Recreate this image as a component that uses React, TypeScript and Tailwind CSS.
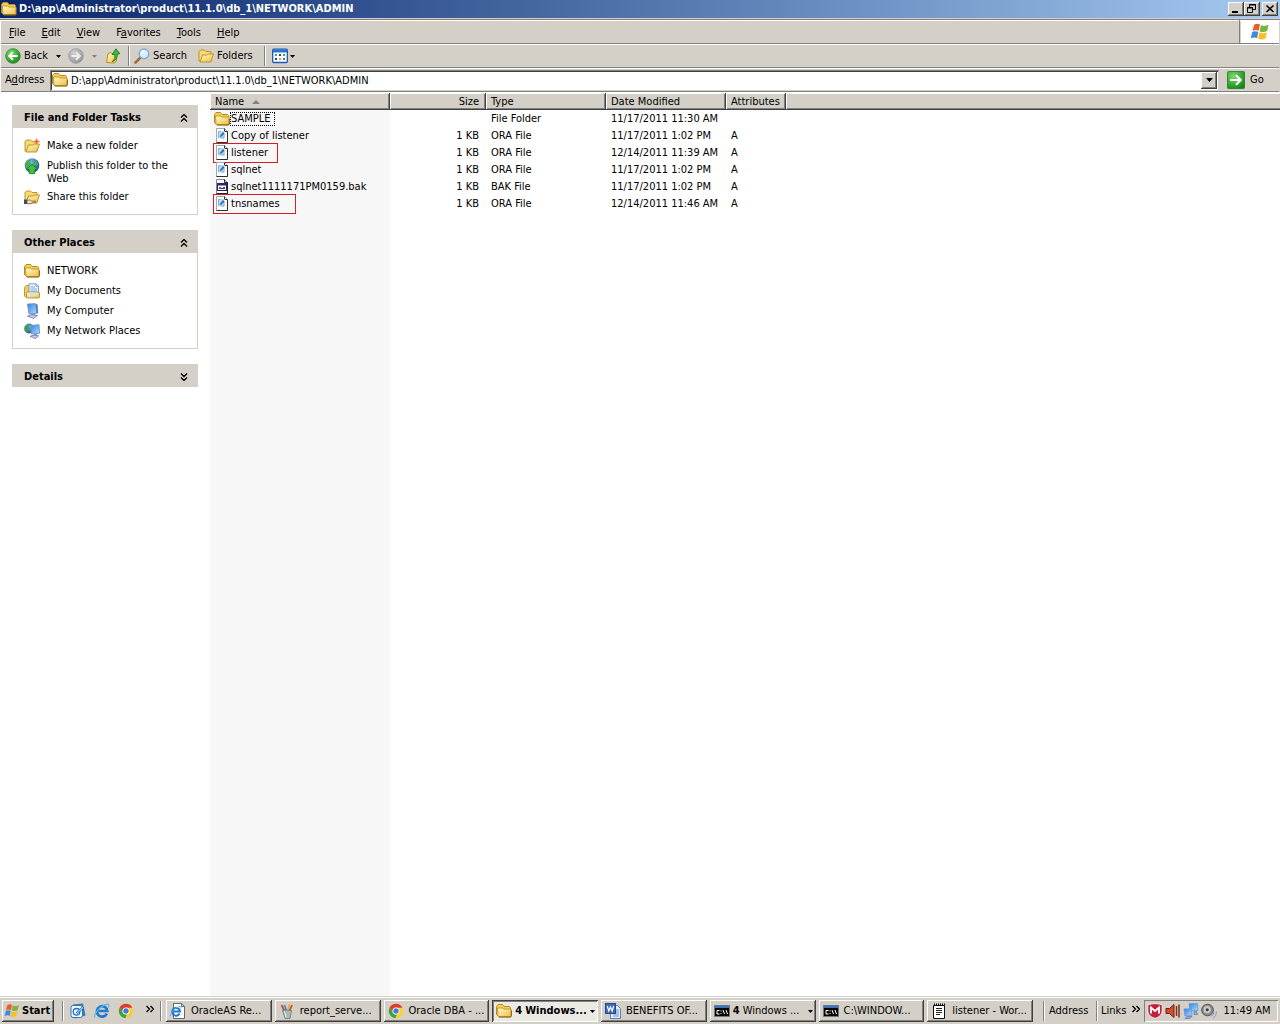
import type { ReactNode } from 'react'
import clsx from 'clsx'

const PATH = 'D:\\app\\Administrator\\product\\11.1.0\\db_1\\NETWORK\\ADMIN'

const raised = 'bg-[#d4d0c8] shadow-[inset_-1px_-1px_#404040,inset_1px_1px_#fff,inset_-2px_-2px_#808080]'
const pressed = 'bg-[#ebe9e4] shadow-[inset_1px_1px_#404040,inset_-1px_-1px_#fff,inset_2px_2px_#808080]'

type FileItem = {
  name: string
  kind: 'folder' | 'ora' | 'bak'
  size: string
  type: string
  modified: string
  attributes: string
  focused?: boolean
  mark?: string
}

const files: FileItem[] = [
  { name: 'SAMPLE', kind: 'folder', size: '', type: 'File Folder', modified: '11/17/2011 11:30 AM', attributes: '', focused: true },
  { name: 'Copy of listener', kind: 'ora', size: '1 KB', type: 'ORA File', modified: '11/17/2011 1:02 PM', attributes: 'A' },
  { name: 'listener', kind: 'ora', size: '1 KB', type: 'ORA File', modified: '12/14/2011 11:39 AM', attributes: 'A', mark: 'w-[65px]' },
  { name: 'sqlnet', kind: 'ora', size: '1 KB', type: 'ORA File', modified: '11/17/2011 1:02 PM', attributes: 'A' },
  { name: 'sqlnet1111171PM0159.bak', kind: 'bak', size: '1 KB', type: 'BAK File', modified: '11/17/2011 1:02 PM', attributes: 'A' },
  { name: 'tnsnames', kind: 'ora', size: '1 KB', type: 'ORA File', modified: '12/14/2011 11:46 AM', attributes: 'A', mark: 'w-[83px]' },
]

const menus = [
  ['', 'F', 'ile'],
  ['', 'E', 'dit'],
  ['', 'V', 'iew'],
  ['F', 'a', 'vorites'],
  ['', 'T', 'ools'],
  ['', 'H', 'elp'],
]

function Icon({ children, className = 'size-4' }: { children: ReactNode; className?: string }) {
  return (
    <svg viewBox="0 0 16 16" className={clsx('shrink-0', className)} aria-hidden="true">
      {children}
    </svg>
  )
}

function Gradients() {
  return (
    <svg className="absolute size-0" aria-hidden="true">
      <defs>
        <linearGradient id="gold" x1="0" y1="0" x2="1" y2="1">
          <stop offset="0" stopColor="#fffbd0" />
          <stop offset="1" stopColor="#efbd3c" />
        </linearGradient>
        <linearGradient id="screen" x1="0" y1="0" x2="1" y2="1">
          <stop offset="0" stopColor="#2f7fe8" />
          <stop offset="1" stopColor="#a5e2ff" />
        </linearGradient>
        <radialGradient id="green" cx="0.35" cy="0.3" r="0.8">
          <stop offset="0" stopColor="#7bdc69" />
          <stop offset="1" stopColor="#128414" />
        </radialGradient>
        <radialGradient id="grey" cx="0.35" cy="0.3" r="0.8">
          <stop offset="0" stopColor="#d0d0d0" />
          <stop offset="1" stopColor="#919191" />
        </radialGradient>
        <radialGradient id="globe" cx="0.35" cy="0.3" r="0.8">
          <stop offset="0" stopColor="#7fc6f5" />
          <stop offset="1" stopColor="#14489a" />
        </radialGradient>
      </defs>
    </svg>
  )
}

function FolderShape() {
  return (
    <>
      <path d="M.5 3.500 2 1.500h4.500L8 3.500h5.500l1 1V13H2L.5 11.500Z" fill="#f3cf58" stroke="#b88a1c" />
      <path d="M1.500 5h5L8 6h6.500q.7 0 .7.8v6q0 1-1 1H3q-1 0-1-1Z" fill="url(#gold)" stroke="#b88a1c" strokeWidth=".8" />
      <path d="M3 14h11.300q1-.1 1-1.200V7.500" fill="none" stroke="#76560c" strokeWidth=".9" />
    </>
  )
}

function OpenFolderShape() {
  return (
    <>
      <path d="M1 13V3.500L2.500 2h4L8 3.500h5V13Z" fill="#f6da72" stroke="#b98c20" strokeWidth=".9" />
      <path d="M2 14 4.500 7l4 .1L10 6h5.500l-2.800 8Z" fill="url(#gold)" stroke="#b98c20" strokeWidth=".9" />
    </>
  )
}

const FolderIcon = () => <Icon><FolderShape /></Icon>

const OpenFolderIcon = () => <Icon><OpenFolderShape /></Icon>

function NewFolderIcon() {
  return (
    <Icon>
      <OpenFolderShape />
      <path d="m12.500.5.900 2.200 2.400.8-2.400.9-.9 2.400-.9-2.400-2.400-.9 2.400-.8Z" fill="#f0542a" stroke="#f59a55" strokeWidth=".8" />
    </Icon>
  )
}

function ShareFolderIcon() {
  return (
    <Icon>
      <OpenFolderShape />
      <path d="M0 10.500h3V15H0Z" fill="#384b72" />
      <path d="M3 11.500c2-.7 3-.7 4.500.6h4v1.200H9L7 14.700H3Z" fill="#fbe0b8" stroke="#6b4a22" strokeWidth=".7" />
    </Icon>
  )
}

function PublishIcon() {
  return (
    <Icon>
      <circle cx="8" cy="7.500" r="7.300" fill="url(#globe)" />
      <path d="M2 4.500Q4 1.500 7.500 1.600L6 4 7 6 4.500 8 4 11 1.500 9ZM10 2l3 1.500 1.500 4L11 7 9.500 4.500Z" fill="#4cab45" />
      <path d="m8 6.200 5.800 5.300H10.800V15.500H5.200v-4H2.200Z" fill="#3fc43a" stroke="#127818" strokeWidth=".8" />
    </Icon>
  )
}

function DocumentsIcon() {
  return (
    <Icon>
      <path d="M.5 4.500 2.500 2.500h3.500v12H2L.5 13Z" fill="#f4cd55" stroke="#b3861d" strokeWidth=".8" />
      <path d="M5 .8h7l2.500 2.500V12H5Z" fill="#eef6ff" stroke="#5d89c4" strokeWidth=".8" />
      <path d="M12 .8v2.500h2.500M6.500 4h4.500M6.500 6h6.500M6.500 8h6.500" fill="none" stroke="#5d9bde" strokeWidth=".8" />
      <rect x="2.500" y="9" width="13" height="6" rx="1" fill="url(#gold)" stroke="#b3861d" strokeWidth=".8" />
      <path d="M4.500 9.500h9v3h-9Z" fill="#cfe2f5" />
    </Icon>
  )
}

function ComputerIcon() {
  return (
    <Icon>
      <path d="m3.500 1 8-.3 1 9.500L5 11Z" fill="url(#screen)" stroke="#7f95c4" />
      <path d="m11.800.8 1.900 1 .3 9-1.500-.7Z" fill="#5872b0" />
      <path d="m7 11 4-.5.500 2L7 13Z" fill="#8ea0c6" />
      <path d="m3.500 13.200 4-1.500 6 .8-4 2.900Z" fill="#c8cde0" stroke="#6677a8" strokeWidth=".8" />
    </Icon>
  )
}

function NetworkPlacesIcon() {
  return (
    <Icon>
      <circle cx="5" cy="5.500" r="4.900" fill="url(#globe)" />
      <path d="M1 3.500Q3 .5 6 1L4.500 4l1 2.500L3.500 9 1 7Z" fill="#3ca045" />
      <path d="m6.500 2.500 8.500-.8.500 8.600-8 .7Z" fill="url(#screen)" stroke="#7f95c4" />
      <path d="m9.500 11 3.500-.3.300 1.800-3.500.5Z" fill="#8ea0c6" />
      <path d="m6 13.300 4-1.200 4.500.8-3.200 2.600Z" fill="#c8cde0" stroke="#6677a8" strokeWidth=".8" />
    </Icon>
  )
}

function OraIcon() {
  return (
    <Icon>
      <path d="M2.500.5h8l3 3v11h-11Z" fill="#fff" stroke="#a0a8b0" />
      <path d="M13.500 3.500v11h-11M10.500.5v3h3" fill="none" stroke="#303030" />
      <rect x="4" y="3" width="6.500" height="7.500" fill="#b8dcf4" />
      <path d="M4.500 10V3.500h2M10 6v4H7" fill="none" stroke="#7ea7c8" strokeWidth=".8" />
      <path d="M5.500 8.500 9 4l1.500 1.500L7 9Z" fill="#2b6ab0" />
    </Icon>
  )
}

function BakIcon() {
  return (
    <Icon>
      <path d="M2.500.5h8l3 3v11h-11Z" fill="#fff" stroke="#888" />
      <path d="M13.500 3.500v11h-11M10.500.5v3h3" fill="none" stroke="#202020" />
      <rect x="3.500" y="4.500" width="9" height="7" fill="#fff" stroke="#20205c" />
      <path d="M3 4h10v2.500H3Z" fill="#202878" />
      <path d="M5 8h2v2H5Z" fill="#c83030" />
      <path d="M9 8h2v2H9Z" fill="#2848b8" />
      <path d="M7 9h2v1H7Z" fill="#333" />
    </Icon>
  )
}

function WindowsFlag({ className }: { className?: string }) {
  return (
    <Icon className={className}>
      <path d="M3.300 2.200Q5.800.6 8 2L6.900 7Q4.600 5.800 2 7.200Z" fill="#ee5a28" />
      <path d="M8.800 2.400q2.600 1.500 6-.2L13.700 7.200q-3.200 1.600-6 .1Z" fill="#79b63c" />
      <path d="M1.800 8Q4.300 6.700 6.700 7.900L5.600 12.900Q3.200 11.700.6 13Z" fill="#3d8ade" />
      <path d="M7.500 8.200q2.800 1.500 6 0L12.400 13.200q-3.100 1.600-6 0Z" fill="#f8bf24" />
    </Icon>
  )
}

function BackIcon() {
  return (
    <Icon>
      <circle cx="8" cy="8" r="7.300" fill="url(#green)" stroke="#2c8a2c" strokeWidth=".8" />
      <path d="M12.500 8H4.500M8 4.200 4.200 8 8 11.800" fill="none" stroke="#fff" strokeWidth="2" />
    </Icon>
  )
}

function ForwardIcon() {
  return (
    <Icon>
      <circle cx="8" cy="8" r="7.300" fill="url(#grey)" stroke="#999" strokeWidth=".8" />
      <path d="M3.500 8h8M8 4.200 11.800 8 8 11.800" fill="none" stroke="#eee" strokeWidth="2" />
    </Icon>
  )
}

function UpIcon() {
  return (
    <Icon>
      <path d="M1.500 14.500 3 5.500l3-1 1.500 1.500 4-.5V13l-2 2Z" fill="url(#gold)" stroke="#b3861d" strokeWidth=".9" />
      <path d="M7 13.500c3-1.500 3-4 2.700-7H7L11 .8l3.800 5H12.200c.3 3.700-1 6.500-5.200 7.700Z" fill="#3dbb35" stroke="#147018" strokeWidth=".8" />
    </Icon>
  )
}

function SearchIcon() {
  return (
    <Icon>
      <path d="m1.500 14.500 5-5" stroke="#a96a3c" strokeWidth="2.600" strokeLinecap="round" />
      <circle cx="10" cy="5.800" r="4.800" fill="#d5efff" stroke="#82a5da" strokeWidth="1.400" />
      <path d="M7.500 5.500Q8 3.200 10.200 3" fill="none" stroke="#fff" strokeWidth="1.400" />
    </Icon>
  )
}

function ViewsIcon() {
  return (
    <Icon>
      <rect x=".7" y="1.200" width="14.600" height="13.300" rx="1" fill="#fff" stroke="#1859b4" strokeWidth="1.300" />
      <path d="M1 1.500h14v3H1Z" fill="#2f74d2" />
      <path d="M3 6h2v2H3Z" fill="#4d8cda" />
      <path d="M7 6h2v2H7Z" fill="#2c437e" />
      <path d="M11 6h2v2h-2Z" fill="#4aa650" />
      <path d="M3 10h2v2H3Z" fill="#2c437e" />
      <path d="M7 10h2v2H7Z" fill="#d6a531" />
      <path d="M11 10h2v2h-2Z" fill="#496ab8" />
    </Icon>
  )
}

function GoIcon() {
  return (
    <Icon className="size-[18px]">
      <rect x=".4" y=".4" width="15.200" height="15.200" rx="1" fill="url(#green)" stroke="#2a7d30" strokeWidth=".8" />
      <path d="M2.800 8h9M8 3.800 12.200 8 8 12.200" fill="none" stroke="#fff" strokeWidth="1.800" />
    </Icon>
  )
}

function IeShape() {
  return (
    <>
      <path d="M12.800 10.700A5.200 5.200 0 1 1 13.300 8H4.500" fill="none" stroke="#2277cf" strokeWidth="2.700" />
      <path d="M1.500 13.500Q-.5 15 1 11.500C3 6.500 9 1.500 13.500 1.200q2.200 0 1 3" fill="none" stroke="#5eb4ee" strokeWidth="1.200" />
    </>
  )
}

const IeIcon = () => <Icon><IeShape /></Icon>

function IeDocIcon() {
  return (
    <Icon>
      <path d="M3.500.5h8l3 3v12h-11Z" fill="#fff" stroke="#666" />
      <path d="M11.500.5v3h3" fill="none" stroke="#666" />
      <g transform="translate(0 2.500) scale(.75)"><IeShape /></g>
    </Icon>
  )
}

function OutlookIcon() {
  return (
    <Icon>
      <path d="m3 1.500 10-1 2.500 12-10.500 3Z" fill="#2e79bf" />
      <rect x="1" y="2.500" width="11.500" height="12" rx="2" fill="#edf7ff" stroke="#2875b8" />
      <circle cx="6.500" cy="8.800" r="3.300" fill="none" stroke="#2875b8" strokeWidth="1.300" />
      <path d="m6 9.500 6.500-6 1.500 1.500-6.500 5.500Z" fill="#90caf1" stroke="#1c5b9a" strokeWidth=".7" />
    </Icon>
  )
}

function ChromeIcon() {
  return (
    <Icon>
      <circle cx="8" cy="8" r="7.200" fill="#fbd02f" />
      <path d="M1.700 4.500A7.200 7.200 0 0 1 14.400 4.700H8A3.300 3.300 0 0 0 5 9.500Z" fill="#dc3d2c" />
      <path d="M1.700 4.500 5 9.600A3.300 3.300 0 0 0 9 11.200L7.300 15.200A7.200 7.200 0 0 1 1.700 4.500Z" fill="#39a348" />
      <circle cx="8" cy="8" r="3.500" fill="#fff" />
      <circle cx="8" cy="8" r="2.700" fill="#3d7ee0" />
    </Icon>
  )
}

function PaintIcon() {
  return (
    <Icon>
      <path d="M6 9 2.500 2M10 9l3-7" stroke="#cc4932" strokeWidth="1.800" />
      <path d="M7.500 8 5.500 2" stroke="#4082c8" strokeWidth="1.600" />
      <path d="M9 8 10.500.8" stroke="#deb23e" strokeWidth="1.600" />
      <path d="m3.500 7 9 .3-1.500 8.200H6Z" fill="#a8bdb5" stroke="#617872" strokeWidth=".8" />
      <path d="m5.500 8.500 1.500 6" stroke="#e5efeb" />
    </Icon>
  )
}

function WordIcon() {
  return (
    <Icon>
      <path d="M5.500 2.500h7l3 3v10h-10Z" fill="#e6effb" stroke="#5273af" strokeWidth=".9" />
      <path d="M11 7h3M11 9h3M8 11h6M8 13h6" stroke="#6b90c9" />
      <rect x=".5" y=".5" width="10" height="10" fill="#3f6bbb" stroke="#25498c" />
      <path d="m2.300 3 1.500 5L5.500 4l1.700 4 1.500-5" fill="none" stroke="#fff" strokeWidth="1.200" />
    </Icon>
  )
}

function ConsoleIcon() {
  return (
    <Icon>
      <path d="M.5 2.500h15v11H.5Z" fill="#050505" stroke="#777" />
      <path d="M1 3h14v2H1Z" fill="#3775c1" />
      <path d="M5.500 7.500H3v3.500h2.500M7 7.500v1M7 10v1M9 7l1.500 4M12 7l1.500 4" fill="none" stroke="#fff" />
    </Icon>
  )
}

function NotepadIcon() {
  return (
    <Icon>
      <path d="M2.500 2.500h11v13h-11Z" fill="#fff" stroke="#111" />
      <path d="M3 1.500h11" stroke="#111" strokeWidth="2" strokeDasharray="1 1" />
      <path d="M5 5.500h6M5 7.500h6M5 9.500h6M5 11.500h4" stroke="#222" />
    </Icon>
  )
}

function ShieldIcon() {
  return (
    <Icon>
      <path d="M.8 1.500Q8-.5 15.200 1.500V8q0 5-7.200 7.500Q.8 13 .8 8Z" fill="#c5203b" stroke="#eee" />
      <path d="M4 10.500V4.500l4 3.500 4-3.500v6" fill="none" stroke="#fff" strokeWidth="1.900" />
    </Icon>
  )
}

function VolumeIcon() {
  return (
    <Icon>
      <path d="M1 5.500h3.500L9 1.500v13l-4.500-4H1Z" fill="#d44d2a" stroke="#6e2010" />
      <path d="M11.500 3v10M14 1.500v13" stroke="#7c2c18" strokeWidth="1.500" />
    </Icon>
  )
}

function LanIcon() {
  return (
    <Icon>
      <path d="m6 .8 8.500-.3.500 7-8 .5Z" fill="url(#screen)" stroke="#6d92d4" strokeWidth=".8" />
      <path d="m1 6 7.500-.3.500 6.800-7 .5Z" fill="url(#screen)" stroke="#6d92d4" strokeWidth=".8" />
      <path d="M11 8.500h2.500l1 3H11ZM4 13.500h5l-2 2H2Z" fill="#91a9d4" stroke="#5d79ae" strokeWidth=".7" />
    </Icon>
  )
}

function SpeakerIcon() {
  return (
    <Icon>
      <circle cx="6.500" cy="7" r="5.800" fill="#8b8b8b" stroke="#4f4f4f" />
      <circle cx="6.200" cy="6.700" r="3.600" fill="#c8c8c8" />
      <circle cx="6.200" cy="6.700" r="1.500" fill="#3c3c3c" />
      <path d="M10 13.500q3-1.500 3-5M12 15.500q3.500-2.500 3.500-7" fill="none" stroke="#8a91d0" />
    </Icon>
  )
}

function DownArrow({ className }: { className?: string }) {
  return (
    <svg viewBox="0 0 5 3" className={clsx('h-[3px] w-[5px] shrink-0', className)} aria-hidden="true">
      <path d="M0 0h5L2.500 3Z" fill="currentColor" />
    </svg>
  )
}

function Chevrons({ className }: { className?: string }) {
  return (
    <svg viewBox="0 0 8 8" className={clsx('size-2 shrink-0', className)} aria-hidden="true">
      <path d="m1 3.500 3-3 3 3M1 7.500l3-3 3 3" fill="none" stroke="#000" strokeWidth="1.300" />
    </svg>
  )
}

function Separator() {
  return <div className="h-5 w-0.5 shrink-0 border-l border-r border-l-[#808080] border-r-white" />
}

function TitleBar() {
  return (
    <header className="flex h-[18px] items-center bg-linear-to-r from-[#0a246a] to-[#a6caf0] pr-0.5 pl-px">
      <FolderIcon />
      <h1 className="ml-0.5 grow text-[11px] font-bold text-white">{PATH}</h1>
      <button aria-label="Minimize" className={clsx('h-[14px] w-4', raised)}>
        <svg viewBox="0 0 16 14" className="h-[14px] w-4"><path d="M4 9h6v2H4Z" /></svg>
      </button>
      <button aria-label="Restore" className={clsx('h-[14px] w-4', raised)}>
        <svg viewBox="0 0 16 14" className="h-[14px] w-4">
          <path d="M5.500 5V2.500h6v5H9M5 3h7M3.500 5.500h5v5h-5ZM3 6h6" fill="none" stroke="#000" />
        </svg>
      </button>
      <button aria-label="Close" className={clsx('ml-0.5 h-[14px] w-4', raised)}>
        <svg viewBox="0 0 16 14" className="h-[14px] w-4"><path d="m4.500 3.500 7 6.500M11.500 3.500 4.500 10" stroke="#000" strokeWidth="1.600" /></svg>
      </button>
    </header>
  )
}

function MenuBar() {
  return (
    <div className="flex h-6 border-b border-[#808080]">
      <nav className="flex grow items-center border-r border-[#808080] pt-0.5">
        {menus.map(([before, key, after]) => (
          <button key={key} className="px-2">
            {before}<span className="underline">{key}</span>{after}
          </button>
        ))}
      </nav>
      <div className="ml-px flex w-[38px] items-center justify-center bg-white">
        <WindowsFlag className="size-5" />
      </div>
    </div>
  )
}

function Toolbar() {
  return (
    <div className="flex h-6 items-center border-t border-b border-t-white border-b-[#808080] pl-1">
      <button className="flex w-12 items-center gap-[3px]"><BackIcon />Back</button>
      <button aria-label="Back history" className="px-[3px]"><DownArrow /></button>
      <button aria-label="Forward" className="ml-1"><ForwardIcon /></button>
      <button aria-label="Forward history" className="ml-2 text-[#808080]"><DownArrow /></button>
      <button aria-label="Up" className="mr-[7px] ml-2"><UpIcon /></button>
      <Separator />
      <button className="ml-1 flex w-16 items-center gap-[3px]"><SearchIcon />Search</button>
      <button className="flex w-[66px] items-center gap-[3px]"><OpenFolderIcon />Folders</button>
      <Separator />
      <button aria-label="Views" className="ml-1.5 flex items-center gap-0.5"><ViewsIcon /><DownArrow /></button>
    </div>
  )
}

function AddressBar() {
  return (
    <form className="flex h-6 items-center border-t border-b border-t-white border-b-[#808080] pl-1" onSubmit={(e) => e.preventDefault()}>
      <label htmlFor="address" className="w-[45px]">A<span className="underline">d</span>dress</label>
      <div className="flex h-[21px] grow items-center bg-white pr-0.5 pl-0.5 shadow-[inset_1px_1px_#808080,inset_-1px_-1px_#d4d0c8,inset_2px_2px_#404040]">
        <FolderIcon />
        <input id="address" defaultValue={PATH} className="ml-[3px] grow bg-transparent pt-px outline-none" />
        <button type="button" aria-label="Address list" className={clsx('flex h-[17px] w-4 items-center justify-center', raised)}>
          <svg viewBox="0 0 7 4" className="h-1 w-[7px]"><path d="M0 0h7L3.500 4Z" /></svg>
        </button>
      </div>
      <button className="ml-2 flex w-[52px] items-center gap-[5px]"><GoIcon />Go</button>
    </form>
  )
}

function Panel({ title, children }: { title: string; children?: ReactNode }) {
  return (
    <section>
      <button className="flex h-[23px] w-full items-center justify-between bg-[#d4d0c8] pt-0.5 pr-2.5 pl-3 font-bold">
        {title}
        <Chevrons className={children ? '' : 'rotate-180'} />
      </button>
      {children ? (
        <ul className="flex flex-col gap-1 border border-t-0 border-[#d4d0c8] pt-2.5 pr-7 pb-[9px] pl-[11px]">{children}</ul>
      ) : null}
    </section>
  )
}

function PanelLink({ icon, label }: { icon: ReactNode; label: string }) {
  return (
    <li>
      <a href="#" className="flex items-start gap-[7px]">
        {icon}
        <span className="pt-px leading-[13px]">{label}</span>
      </a>
    </li>
  )
}

function Sidebar() {
  return (
    <aside className="flex w-[210px] shrink-0 flex-col gap-[15px] px-3 pt-[13px]">
      <Panel title="File and Folder Tasks">
        <PanelLink icon={<NewFolderIcon />} label="Make a new folder" />
        <PanelLink icon={<PublishIcon />} label="Publish this folder to the Web" />
        <PanelLink icon={<ShareFolderIcon />} label="Share this folder" />
      </Panel>
      <Panel title="Other Places">
        <PanelLink icon={<FolderIcon />} label="NETWORK" />
        <PanelLink icon={<DocumentsIcon />} label="My Documents" />
        <PanelLink icon={<ComputerIcon />} label="My Computer" />
        <PanelLink icon={<NetworkPlacesIcon />} label="My Network Places" />
      </Panel>
      <Panel title="Details" />
    </aside>
  )
}

const fileIcons = { folder: <FolderIcon />, ora: <OraIcon />, bak: <BakIcon /> }

function FileTable() {
  const head = 'pl-[5px] pr-[7px] font-normal bg-[#d4d0c8] shadow-[inset_-1px_-1px_#404040,inset_1px_1px_#fff,inset_-2px_-2px_#808080]'
  return (
    <main className="grow bg-[linear-gradient(to_right,#f7f7f7_180px,#fff_180px)] pt-px">
      <table className="w-full table-fixed border-collapse text-left">
        <colgroup>
          <col className="w-[180px]" />
          <col className="w-24" />
          <col className="w-[120px]" />
          <col className="w-[120px]" />
          <col className="w-[60px]" />
          <col />
        </colgroup>
        <thead>
          <tr className="h-[17px]">
            <th className={head}>
              <span className="flex items-center gap-2">
                Name
                <svg viewBox="0 0 8 4" className="h-1 w-2"><path d="M4 0 8 4H0Z" fill="#808080" /></svg>
              </span>
            </th>
            <th className={clsx(head, 'text-right')}>Size</th>
            <th className={head}>Type</th>
            <th className={head}>Date Modified</th>
            <th className={head}>Attributes</th>
            <td className="bg-[#d4d0c8] shadow-[inset_0_-1px_#404040,inset_1px_1px_#fff,inset_0_-2px_#808080]" />
          </tr>
        </thead>
        <tbody>
          {files.map((file) => (
            <tr key={file.name} className="h-[17px]">
              <td className="pl-1">
                <div className="relative flex h-[17px] items-center">
                  {fileIcons[file.kind]}
                  <span className={clsx('pl-px', file.focused && 'pr-1 outline-1 -outline-offset-1 outline-dotted')}>{file.name}</span>
                  {file.mark ? <span className={clsx('absolute -top-px -left-px h-5 border border-[#d02027]', file.mark)} /> : null}
                </div>
              </td>
              <td className="pr-[7px] text-right">{file.size}</td>
              <td className="pl-[5px]">{file.type}</td>
              <td className="pl-[5px] whitespace-nowrap">{file.modified}</td>
              <td className="pl-[5px]">{file.attributes}</td>
              <td />
            </tr>
          ))}
        </tbody>
      </table>
    </main>
  )
}

const tasks = [
  { icon: <IeDocIcon />, label: 'OracleAS Re...' },
  { icon: <PaintIcon />, label: 'report_serve...' },
  { icon: <ChromeIcon />, label: 'Oracle DBA - ...' },
  { icon: <FolderIcon />, label: 'Windows...', count: 4, active: true },
  { icon: <WordIcon />, label: 'BENEFITS OF...' },
  { icon: <ConsoleIcon />, label: 'Windows ...', count: 4 },
  { icon: <ConsoleIcon />, label: 'C:\\WINDOW...' },
  { icon: <NotepadIcon />, label: 'listener - Wor...' },
]

function Taskbar() {
  return (
    <footer className="flex h-7 shrink-0 items-center border-t border-[#d4d0c8] bg-[#d4d0c8] px-0.5 pt-0.5 pb-px shadow-[inset_0_1px_#fff]">
      <button className={clsx('flex h-[22px] w-[52px] items-center gap-0.5 pl-0.5 font-bold', raised)}>
        <WindowsFlag />
        Start
      </button>
      <div className="mr-1.5 ml-2 flex"><Separator /></div>
      <div className="flex w-[90px] items-center gap-2">
        <button aria-label="Outlook Express"><OutlookIcon /></button>
        <button aria-label="Internet Explorer"><IeIcon /></button>
        <button aria-label="Google Chrome"><ChromeIcon /></button>
        <button aria-label="More shortcuts" className="mb-1 ml-1"><Chevrons className="rotate-90" /></button>
      </div>
      <div className="mr-1 flex"><Separator /></div>
      <div className="flex min-w-0 grow gap-[3px]">
        {tasks.map((task) => (
          <button
            key={task.label}
            className={clsx('flex h-[22px] min-w-0 flex-1 items-center gap-[3px] pr-[3px] pl-1', task.active ? pressed : raised, task.active && 'font-bold')}
          >
            {task.icon}
            <span className={clsx('grow text-left whitespace-nowrap', !task.count && 'pl-0.5')}>
              {task.count ? <b className="mr-[3px]">{task.count}</b> : null}
              {task.label}
            </span>
            {task.count ? <DownArrow /> : null}
          </button>
        ))}
      </div>
      <div className="mr-1 ml-2.5 flex"><Separator /></div>
      <span className="w-[47px]">Address</span>
      <Separator />
      <span className="ml-[3px] w-[31px]">Links</span>
      <button aria-label="More links" className="mr-1 mb-1"><Chevrons className="rotate-90" /></button>
      <div className="flex h-[22px] w-[134px] items-center gap-0.5 px-[3px] shadow-[inset_1px_1px_#808080,inset_-1px_-1px_#fff]">
        <ShieldIcon />
        <VolumeIcon />
        <LanIcon />
        <SpeakerIcon />
        <time className="grow text-center whitespace-nowrap">11:49 AM</time>
      </div>
    </footer>
  )
}

export default function App() {
  return (
    <div className="flex min-h-screen flex-col bg-white font-['DejaVu_Sans_Condensed','DejaVu_Sans',sans-serif] text-[11px] leading-[14px] text-black">
      <Gradients />
      <TitleBar />
      <div className="border-t border-[#d4d0c8]">
        <div className="border-t border-[#808080] bg-[#d4d0c8] px-px shadow-[inset_1px_1px_#fff]">
          <MenuBar />
          <Toolbar />
          <AddressBar />
        </div>
      </div>
      <div className="flex grow">
        <Sidebar />
        <FileTable />
      </div>
      <Taskbar />
    </div>
  )
}
